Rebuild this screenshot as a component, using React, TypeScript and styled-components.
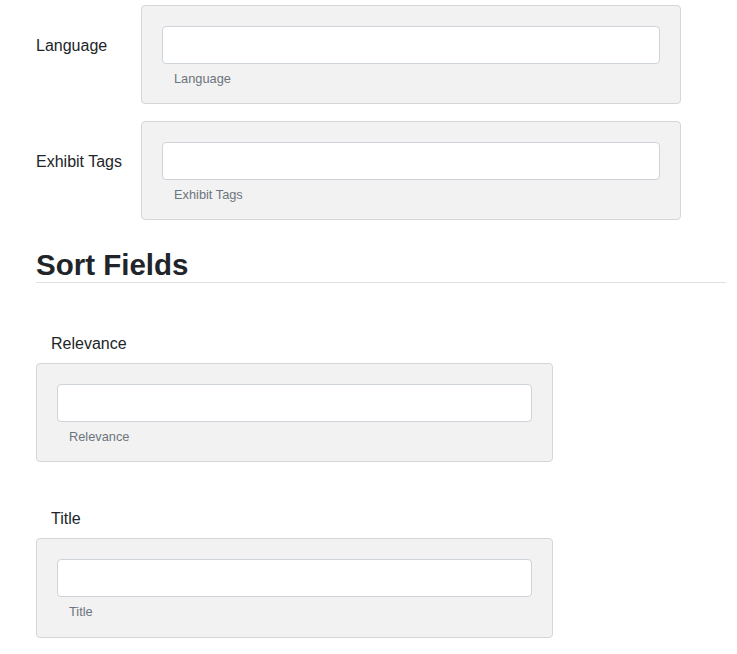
import React from "react";
import styled, { createGlobalStyle } from "styled-components";

const GlobalStyle = createGlobalStyle`
  html, body {
    margin: 0;
    padding: 0;
    background: #ffffff;
  }
  body {
    font-family: "Liberation Sans", Arial, sans-serif;
    font-size: 16px;
    line-height: 1.5;
    color: #212529;
  }
  * { box-sizing: border-box; }
`;

const Page = styled.div`
  padding: 5px 11px 20px 36px;
`;

const FieldRow = styled.div`
  display: flex;
  align-items: flex-start;
  margin-bottom: 16.5px;
`;

const RowLabel = styled.label`
  width: 105px;
  flex: none;
  padding-top: 29px;
  font-size: 16px;
  line-height: 24px;
  color: #212529;
`;

const Well = styled.div<{ $width: number }>`
  width: ${(p) => p.$width}px;
  background: #f2f2f2;
  border: 1px solid #d6d6d6;
  border-radius: 4px;
  padding: 20px 20px 15.2px 20px;
`;

const Input = styled.input`
  display: block;
  width: 100%;
  height: 38px;
  padding: 6px 12px;
  font-family: inherit;
  font-size: 16px;
  background: #ffffff;
  border: 1px solid #ced4da;
  border-radius: 4px;
  outline: none;
`;

const HelpText = styled.small`
  display: block;
  margin-top: 5px;
  padding-left: 12px;
  font-size: 12.8px;
  line-height: 19.2px;
  color: #6c757d;
`;

const SectionHeading = styled.h2`
  margin: 26.8px 0 0 0;
  font-size: 29.5px;
  font-weight: 700;
  line-height: 1.2;
  color: #212529;
  border-bottom: 1px solid #dee2e6;
`;

const SortList = styled.div`
  display: flex;
  flex-direction: column;
  gap: 45px;
  padding-top: 48.5px;
`;

const SortField = styled.div`
  display: flex;
  flex-direction: column;
`;

const SortLabel = styled.label`
  padding-left: 15px;
  margin-bottom: 7px;
  font-size: 16px;
  line-height: 24px;
  color: #212529;
`;

const Field: React.FC<{ label: string; width: number }> = ({ label, width }) => (
  <Well $width={width}>
    <Input type="text" aria-label={label} />
    <HelpText>{label}</HelpText>
  </Well>
);

export default function App() {
  const filters = ["Language", "Exhibit Tags"];
  const sorts = ["Relevance", "Title"];
  return (
    <>
      <GlobalStyle />
      <Page>
        {filters.map((f) => (
          <FieldRow key={f}>
            <RowLabel>{f}</RowLabel>
            <Field label={f} width={540} />
          </FieldRow>
        ))}
        <SectionHeading>Sort Fields</SectionHeading>
        <SortList>
          {sorts.map((s) => (
            <SortField key={s}>
              <SortLabel>{s}</SortLabel>
              <Field label={s} width={517} />
            </SortField>
          ))}
        </SortList>
      </Page>
    </>
  );
}
